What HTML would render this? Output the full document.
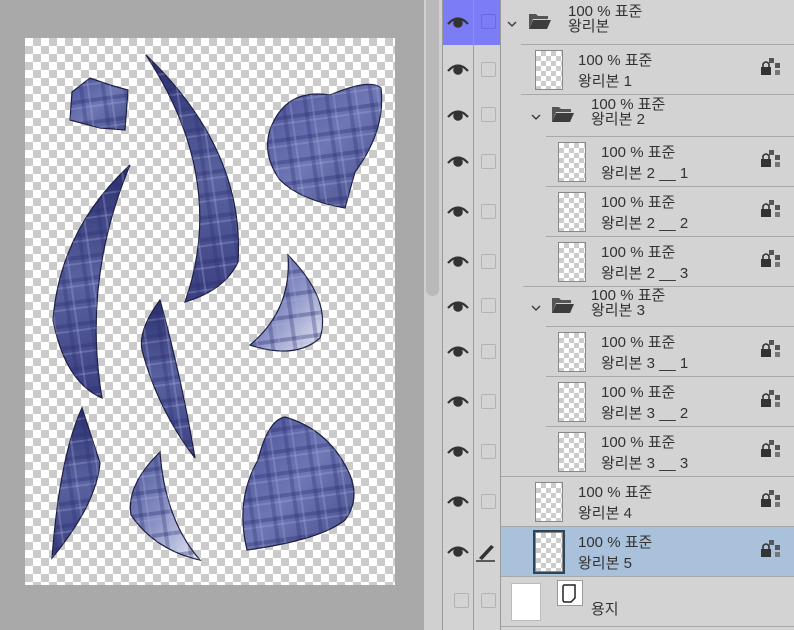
<!DOCTYPE html>
<html><head><meta charset="utf-8">
<style>
*{margin:0;padding:0;box-sizing:border-box}
body{width:794px;height:630px;overflow:hidden;background:#a9a9a9;position:relative;font-family:"Liberation Sans","Noto Sans CJK KR",sans-serif;color:#222}
#canvas{position:absolute;left:25px;top:38px;width:370px;height:547px;
background-color:#fff;background-image:linear-gradient(45deg,#cbcbcb 25%,transparent 25%,transparent 75%,#cbcbcb 75%),linear-gradient(45deg,#cbcbcb 25%,transparent 25%,transparent 75%,#cbcbcb 75%);background-size:16px 16px;background-position:0 0,8px 8px}
#track{position:absolute;left:424px;top:0;width:18px;height:630px;background:#d0d0d0}
#thumb{position:absolute;left:426px;top:0;width:13px;height:296px;background:#b9b9b9;border-radius:0 0 7px 7px}
#panel{position:absolute;left:442px;top:0;width:352px;height:630px;background:#d3d3d3;border-left:1px solid #999}
.vl{position:absolute;top:0;height:630px;width:1px;background:#999}
.row{position:absolute;left:0;width:352px}
.eye{position:absolute;left:4px;width:22px;height:14px}
.cb{position:absolute;left:38px;width:15px;height:15px;border:1px solid #b3b3b3;border-radius:2px}
.txt{position:absolute;font-size:15px;line-height:17px;color:#333;white-space:nowrap}
.th{position:absolute;width:28px;height:40px;border:1px solid #888;background-color:#fff;background-image:linear-gradient(45deg,#ccc 25%,transparent 25%,transparent 75%,#ccc 75%),linear-gradient(45deg,#ccc 25%,transparent 25%,transparent 75%,#ccc 75%);background-size:10px 10px;background-position:0 0,5px 5px}
.sep{position:absolute;height:1px;background:#a8a8a8;right:0}
.lock{position:absolute;left:318px;width:20px;height:18px}
.chev{position:absolute;width:10px;height:6px}
.fold{position:absolute;width:24px;height:18px}
</style></head><body>
<div id="canvas"></div>
<svg style="position:absolute;left:0;top:0" width="420" height="630">
<defs>
<linearGradient id="g1" x1="0" y1="0" x2="0" y2="1"><stop offset="0" stop-color="#2b2f6e"/><stop offset=".5" stop-color="#5a63a0"/><stop offset="1" stop-color="#3a3f80"/></linearGradient>
<linearGradient id="g2" x1="0" y1="0" x2="1" y2="1"><stop offset="0" stop-color="#4d5597"/><stop offset=".5" stop-color="#8890c4"/><stop offset="1" stop-color="#e8eaf4"/></linearGradient>
<linearGradient id="g3" x1="0" y1="0" x2="1" y2="1"><stop offset="0" stop-color="#4a5298"/><stop offset=".5" stop-color="#6f78b4"/><stop offset="1" stop-color="#454c8a"/></linearGradient>
<pattern id="pl" width="22" height="22" patternUnits="userSpaceOnUse" patternTransform="rotate(-8)">
<rect x="0" y="0" width="22" height="4" fill="#2a2f70" opacity=".35"/><rect x="0" y="7" width="22" height="2" fill="#aab0e0" opacity=".3"/>
<rect x="0" y="0" width="4" height="22" fill="#2a2f70" opacity=".3"/><rect x="8" y="0" width="2" height="22" fill="#aab0e0" opacity=".3"/>
</pattern>
</defs>
<g stroke="#1c1e40" stroke-width="1.2" id="sh">
<path d="M72,92 L90,78 L110,85 L128,90 L125,130 L100,128 L70,120 Z" fill="url(#g3)"/>
<path d="M146,55 Q245,150 238,262 Q225,290 185,302 Q228,180 146,55 Z" fill="url(#g1)"/>
<path d="M270,130 Q285,88 330,95 Q370,78 381,88 Q386,130 355,172 L345,208 Q300,200 280,180 Q262,155 270,130 Z" fill="url(#g3)"/>
<path d="M130,165 Q60,230 53,320 Q65,382 102,398 Q82,280 130,165 Z" fill="url(#g1)"/>
<path d="M288,255 Q332,300 320,338 Q295,360 250,345 Q292,310 288,255 Z" fill="url(#g2)"/>
<path d="M160,300 Q138,330 142,350 Q158,410 195,458 Q182,380 160,300 Z" fill="url(#g1)"/>
<path d="M82,408 Q60,455 52,558 Q96,505 100,463 Z" fill="url(#g1)"/>
<path d="M160,452 Q126,485 131,515 Q155,550 200,560 Q165,520 160,452 Z" fill="url(#g2)"/>
<path d="M247,550 Q235,500 258,460 Q268,420 285,417 Q330,430 350,475 Q360,500 345,520 Q320,540 247,550 Z" fill="url(#g3)"/>
</g>
<g fill="url(#pl)" stroke="none">
<path d="M72,92 L90,78 L110,85 L128,90 L125,130 L100,128 L70,120 Z"/>
<path d="M146,55 Q245,150 238,262 Q225,290 185,302 Q228,180 146,55 Z"/>
<path d="M270,130 Q285,88 330,95 Q370,78 381,88 Q386,130 355,172 L345,208 Q300,200 280,180 Q262,155 270,130 Z"/>
<path d="M130,165 Q60,230 53,320 Q65,382 102,398 Q82,280 130,165 Z"/>
<path d="M288,255 Q332,300 320,338 Q295,360 250,345 Q292,310 288,255 Z"/>
<path d="M160,300 Q138,330 142,350 Q158,410 195,458 Q182,380 160,300 Z"/>
<path d="M82,408 Q60,455 52,558 Q96,505 100,463 Z"/>
<path d="M160,452 Q126,485 131,515 Q155,550 200,560 Q165,520 160,452 Z"/>
<path d="M247,550 Q235,500 258,460 Q268,420 285,417 Q330,430 350,475 Q360,500 345,520 Q320,540 247,550 Z"/>
</g>
</svg>
<div id="track"></div><div id="thumb"></div>
<div id="panel">
<div style="position:absolute;left:0;top:0;width:58px;height:45px;background:#7b7cf6"></div>
<div class="row" style="top:527px;left:58px;width:294px;height:50px;background:#a9c1da"></div>
<div class="vl" style="left:30px"></div>
<div class="vl" style="left:57px"></div>
<div id="rows"></div>
</div>
<script>
const P=document.getElementById('rows');
const eye='<svg class="eye" viewBox="0 0 22 14"><path d="M1,9 Q11,-2 21,9" fill="none" stroke="#333" stroke-width="2.2"/><circle cx="11" cy="8" r="4.8" fill="#333"/></svg>';
const lock='<svg class="lock" viewBox="0 0 20 18"><rect x="8" y="0" width="5" height="5" fill="#555"/><rect x="14" y="5" width="5" height="5" fill="#555"/><rect x="14" y="12" width="5" height="5" fill="#777"/><path d="M2,9 V6 Q5,2 8,6 V9" fill="none" stroke="#333" stroke-width="1.6"/><rect x="0" y="9" width="10" height="8" fill="#333"/></svg>';
const fold='<svg class="fold" viewBox="0 0 24 18"><path d="M1,2 H8 L10,4 H20 V7 H5 L1,17 Z" fill="#555"/><path d="M5,8 H23 L19,17 H1 Z" fill="#3c3c3c"/></svg>';
const chev='<svg class="chev" viewBox="0 0 10 6"><path d="M1,1 L5,5 L9,1" fill="none" stroke="#333" stroke-width="1.3"/></svg>';
let h='';
function grp(top,hh,cx,fx,tx,name,lx){
 h+=`<div class="row" style="top:${top}px;height:${hh}px">`+eye.replace('class="eye"',`class="eye" style="top:${hh/2-8}px;left:4px;position:absolute"`)
 +`<div class="cb" style="top:${hh/2-9}px${top==0?';border-color:#6a6ae0':''}"></div>`
 +chev.replace('class="chev"',`class="chev" style="left:${cx}px;top:${hh/2-2}px"`)
 +fold.replace('class="fold"',`class="fold" style="left:${fx}px;top:${hh/2-11}px"`)
 +`<div class="txt" style="left:${tx}px;top:${hh/2-19}px;line-height:15px">100 % 표준<br>${name}</div>`
 +`<div class="sep" style="left:${lx}px;top:${hh-1}px"></div></div>`;
}
function lay(top,thx,tx,name,lx,edit){
 h+=`<div class="row" style="top:${top}px;height:50px">`+eye.replace('class="eye"','class="eye" style="top:17px;left:4px;position:absolute"')
 +(edit?'<svg style="position:absolute;left:32px;top:15px" width="22" height="20" viewBox="0 0 22 20"><path d="M4,16 L16,3 L19,5 L7,18 Z" fill="#333"/><path d="M1,19 H20" stroke="#333" stroke-width="1.5"/></svg>':`<div class="cb" style="top:17px"></div>`)
 +`<div class="th" style="left:${thx}px;top:5px${edit?';outline:2px solid #2d4558':''}"></div>`
 +`<div class="txt" style="left:${tx}px;top:5px;line-height:21px">100 % 표준<br>${name}</div>`
 +lock.replace('class="lock"','class="lock" style="top:13px"')
 +`<div class="sep" style="left:${lx}px;top:49px"></div></div>`;
}
grp(0,45,64,85,125,'왕리본',78);
lay(45,92,135,'왕리본 1',78);
grp(95,42,88,108,148,'왕리본 2',103);
lay(137,115,158,'왕리본 2 __ 1',103);
lay(187,115,158,'왕리본 2 __ 2',103);
lay(237,115,158,'왕리본 2 __ 3',80);
grp(287,40,88,108,148,'왕리본 3',103);
lay(327,115,158,'왕리본 3 __ 1',103);
lay(377,115,158,'왕리본 3 __ 2',103);
lay(427,115,158,'왕리본 3 __ 3',58);
lay(477,92,135,'왕리본 4',58);
lay(527,92,135,'왕리본 5',58,true);
h+=`<div class="row" style="top:577px;height:53px"><div class="cb" style="left:11px;top:16px"></div><div class="cb" style="top:16px"></div>
<div style="position:absolute;left:68px;top:6px;width:30px;height:38px;background:#fff;border:1px solid #bbb"></div>
<div style="position:absolute;left:114px;top:3px;width:26px;height:26px;background:#fff;border:1px solid #999"><svg width="24" height="24" viewBox="0 0 24 24"><path d="M6,4 H17 V17 L13,21 H7 Q5,21 5,19 V5 Z" fill="none" stroke="#222" stroke-width="1.5"/></svg></div>
<div class="txt" style="left:148px;top:24px">용지</div>
<div class="sep" style="left:58px;top:49px"></div></div>`;
P.innerHTML=h;
</script>
</body></html>
